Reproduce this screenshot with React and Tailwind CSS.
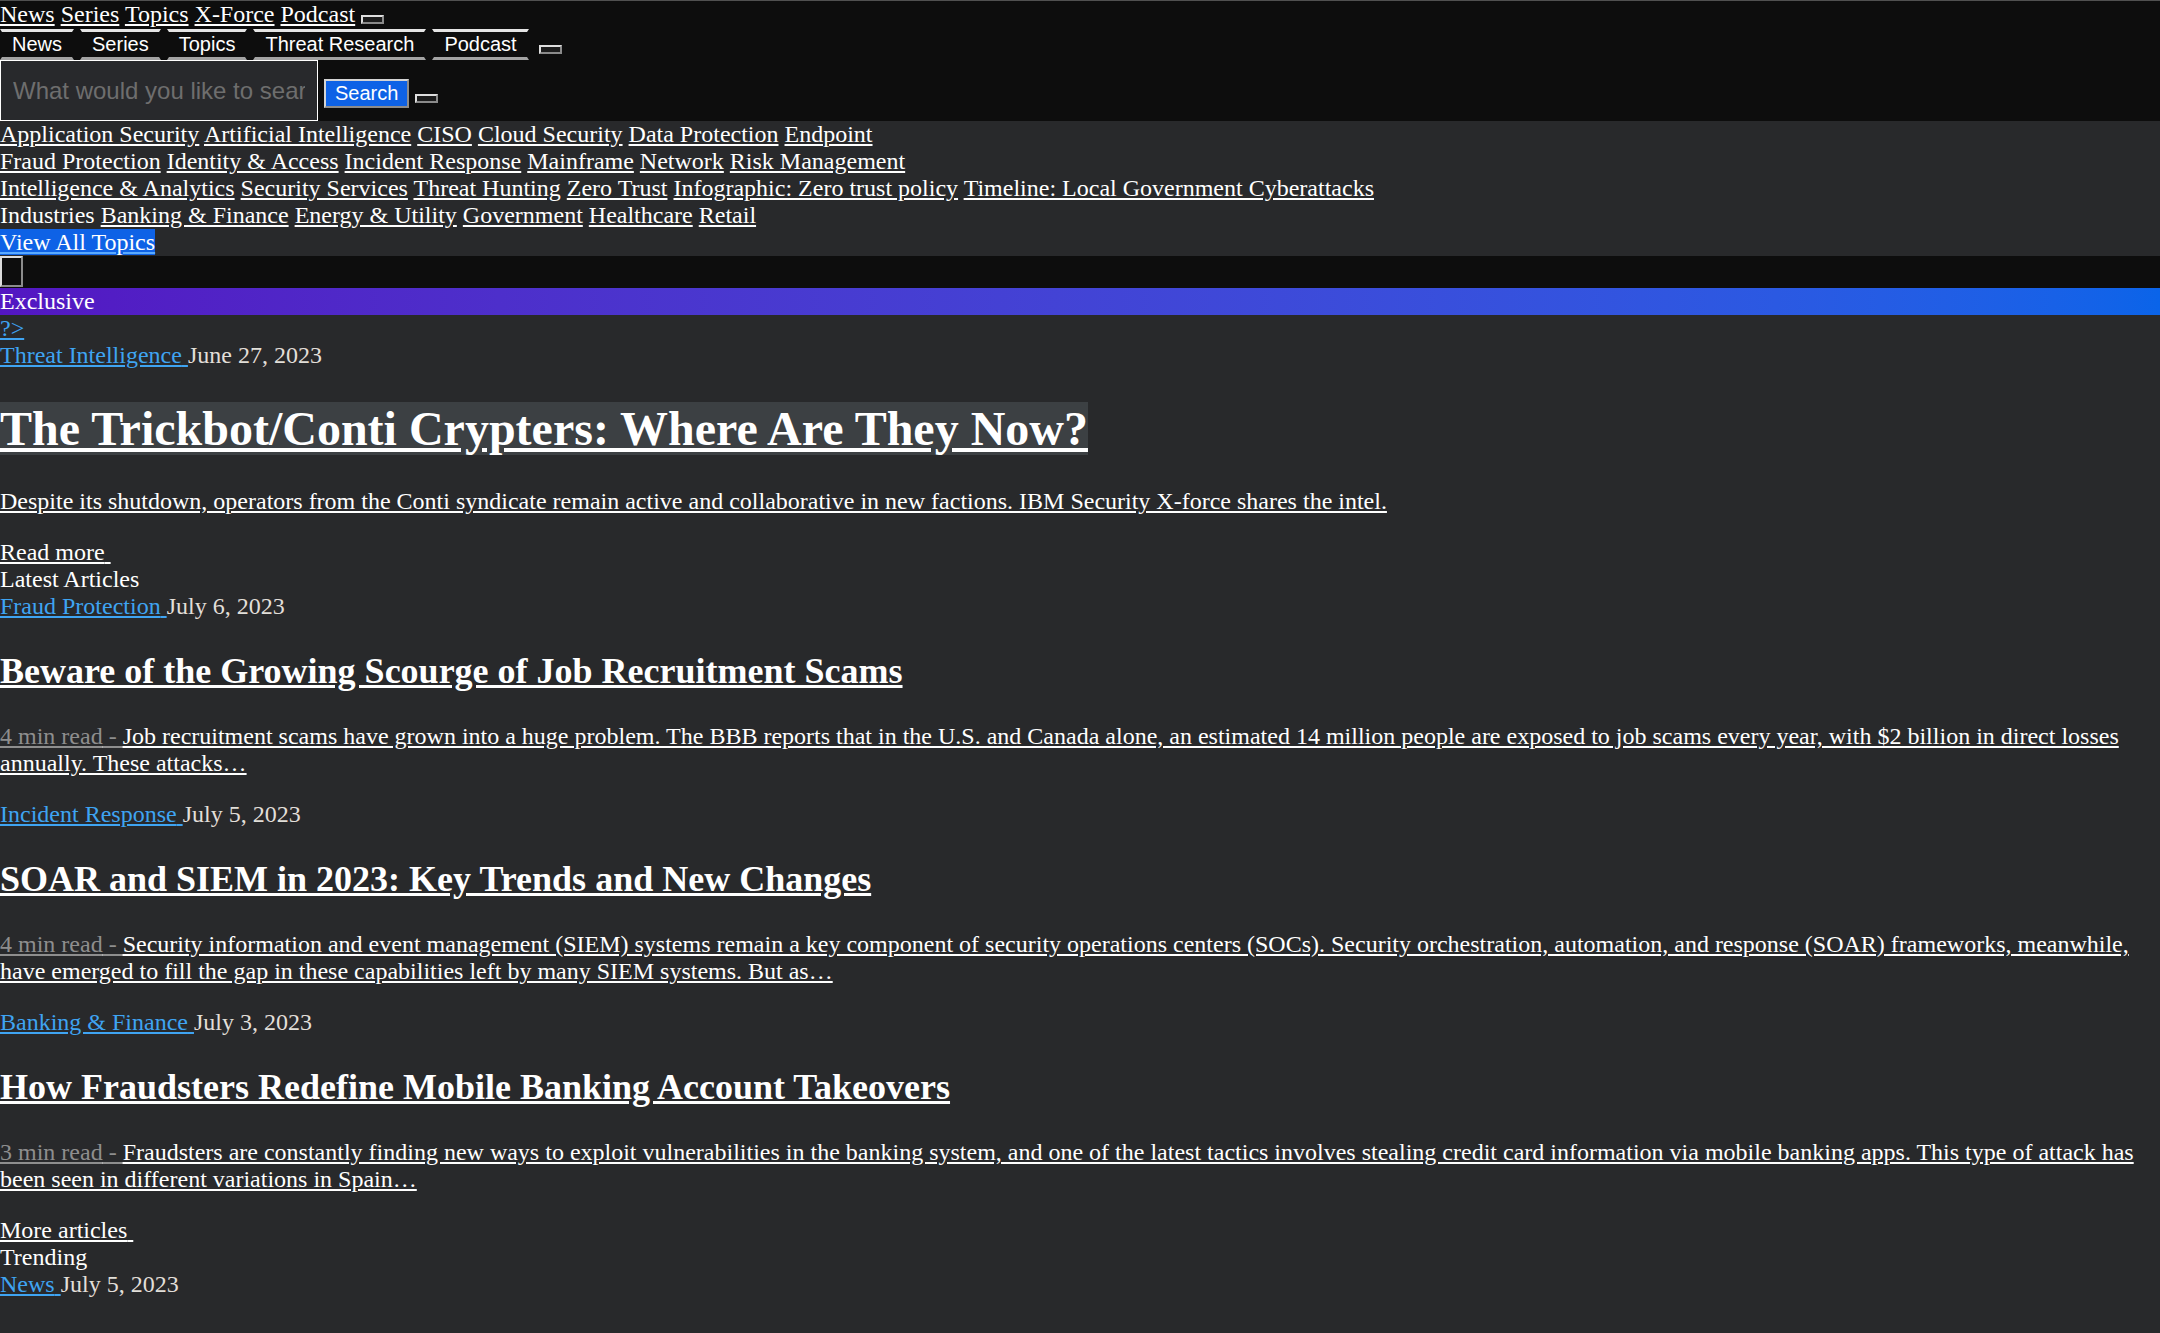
const topNav = ['News', 'Series', 'Topics', 'X-Force', 'Podcast'];
const tabs = ['News', 'Series', 'Topics', 'Threat Research', 'Podcast'];

const topicRows = [
  { links: ['Application Security', 'Artificial Intelligence', 'CISO', 'Cloud Security', 'Data Protection', 'Endpoint'] },
  { links: ['Fraud Protection', 'Identity & Access', 'Incident Response', 'Mainframe', 'Network', 'Risk Management'] },
  {
    links: [
      'Intelligence & Analytics',
      'Security Services',
      'Threat Hunting',
      'Zero Trust',
      'Infographic: Zero trust policy',
      'Timeline: Local Government Cyberattacks',
    ],
  },
  { label: 'Industries', links: ['Banking & Finance', 'Energy & Utility', 'Government', 'Healthcare', 'Retail'] },
];

const articles = [
  {
    category: 'Fraud Protection',
    date: 'July 6, 2023',
    title: 'Beware of the Growing Scourge of Job Recruitment Scams',
    read: '4 min read',
    excerpt:
      'Job recruitment scams have grown into a huge problem. The BBB reports that in the U.S. and Canada alone, an estimated 14 million people are exposed to job scams every year, with $2 billion in direct losses annually. These attacks…',
  },
  {
    category: 'Incident Response',
    date: 'July 5, 2023',
    title: 'SOAR and SIEM in 2023: Key Trends and New Changes',
    read: '4 min read',
    excerpt:
      'Security information and event management (SIEM) systems remain a key component of security operations centers (SOCs). Security orchestration, automation, and response (SOAR) frameworks, meanwhile, have emerged to fill the gap in these capabilities left by many SIEM systems. But as…',
  },
  {
    category: 'Banking & Finance',
    date: 'July 3, 2023',
    title: 'How Fraudsters Redefine Mobile Banking Account Takeovers',
    read: '3 min read',
    excerpt:
      'Fraudsters are constantly finding new ways to exploit vulnerabilities in the banking system, and one of the latest tactics involves stealing credit card information via mobile banking apps. This type of attack has been seen in different variations in Spain…',
  },
];

function BlankButton({ className = '' }) {
  return (
    <button
      className={`inline-block h-[9px] w-[23px] border-2 border-t-[#dedede] border-l-[#dedede] border-r-[#8a8a8a] border-b-[#8a8a8a] bg-[#1c1c1c] align-baseline ${className}`}
    />
  );
}

function CategoryLine({ category, date }) {
  return (
    <div>
      <a href="#" className="text-[#3fa4f2] underline">
        {category}{' '}
      </a>
      <span className="text-[#e2dfd9]">{date}</span>
    </div>
  );
}

function ArticleItem({ article }) {
  const { category, date, title, read, excerpt } = article;
  return (
    <div>
      <CategoryLine category={category} date={date} />
      <h2 className="my-[30px] text-[36px] font-bold leading-[43px]">
        <a href="#" className="underline">
          {title}
        </a>
      </h2>
      <a href="#" className="block">
        <p className="mb-[24px] underline">
          <span className="text-[#8e8e8e] underline decoration-[#8e8e8e]">{read} - </span>
          {excerpt}
        </p>
      </a>
    </div>
  );
}

export default function App() {
  return (
    <div className="min-h-screen border-t border-[#505050] bg-[#28292b] font-['Liberation_Serif',serif] text-[24px] leading-[27px] text-white">
      <header className="bg-[#0d0d0d]">
        <div className="h-[27px]">
          {topNav.map((item) => (
            <span key={item}>
              <a href="#" className="underline">
                {item}
              </a>{' '}
            </span>
          ))}
          <BlankButton />
        </div>
        <div className="flex h-[32px] items-center gap-[6px]">
          {tabs.map((tab) => (
            <button
              key={tab}
              className="border-x-2 border-y-[3px] border-x-transparent border-t-[#e4e4e4] border-b-[#a3a3a3] px-[10px] py-[1px] font-['Liberation_Sans',sans-serif] text-[20px] leading-[23px] text-white"
            >
              {tab}
            </button>
          ))}
          <BlankButton className="ml-[4px] mt-[10px]" />
        </div>
        <div className="flex items-center gap-[6px]">
          <input
            type="text"
            placeholder="What would you like to search?"
            className="h-[61px] w-[318px] border border-white bg-[#28292c] px-[12px] font-['Liberation_Sans',sans-serif] text-[24px] text-white placeholder:text-[#6e6e6e]"
          />
          <button className="mt-[5px] border-2 border-t-[#d4d4d4] border-l-[#d4d4d4] border-r-[#8c8c8c] border-b-[#8c8c8c] bg-[#0e62e6] px-[9px] py-[1px] font-['Liberation_Sans',sans-serif] text-[20px] leading-[23px] text-white">
            Search
          </button>
          <BlankButton className="mt-[16px]" />
        </div>
      </header>

      <nav>
        {topicRows.map((row, i) => (
          <div key={i}>
            {row.label && <span>{row.label} </span>}
            {row.links.map((link) => (
              <span key={link}>
                <a href="#" className="underline">
                  {link}
                </a>{' '}
              </span>
            ))}
          </div>
        ))}
        <div>
          <a href="#" className="bg-[#0e62e6] underline decoration-[#5aaaff]">
            View All Topics
          </a>
        </div>
      </nav>

      <div className="h-[32px] bg-[#0d0d0d]">
        <button className="block h-[31px] w-[23px] border-2 border-t-[#dcdcdc] border-l-[#dcdcdc] border-r-[#8c8c8c] border-b-[#8c8c8c] bg-[#0d0d0d]" />
      </div>

      <div className="bg-gradient-to-r from-[#5316c2] to-[#0a64e9]">Exclusive</div>

      <main>
        <div>
          <a href="#" className="text-[#3fa4f2] underline">
            ?&gt;
          </a>
        </div>
        <CategoryLine category="Threat Intelligence" date="June 27, 2023" />
        <h1 className="my-[32px] text-[48px] font-bold leading-[55px]">
          <a href="#" className="bg-[#3c4043] underline">
            The Trickbot/Conti Crypters: Where Are They Now?
          </a>
        </h1>
        <a href="#" className="block">
          <p className="mb-[24px] underline">
            Despite its shutdown, operators from the Conti syndicate remain active and collaborative in new factions. IBM
            Security X-force shares the intel.
          </p>
        </a>
        <div>
          <a href="#" className="underline">
            Read more{'\u00a0'}
          </a>
        </div>
        <div>Latest Articles</div>
        {articles.map((article) => (
          <ArticleItem key={article.title} article={article} />
        ))}
        <div>
          <a href="#" className="underline">
            More articles{'\u00a0'}
          </a>
        </div>
        <div>Trending</div>
        <CategoryLine category="News" date="July 5, 2023" />
        <div className="mt-[39px] h-[20px] bg-[#0d0d0d]" />
      </main>
    </div>
  );
}
